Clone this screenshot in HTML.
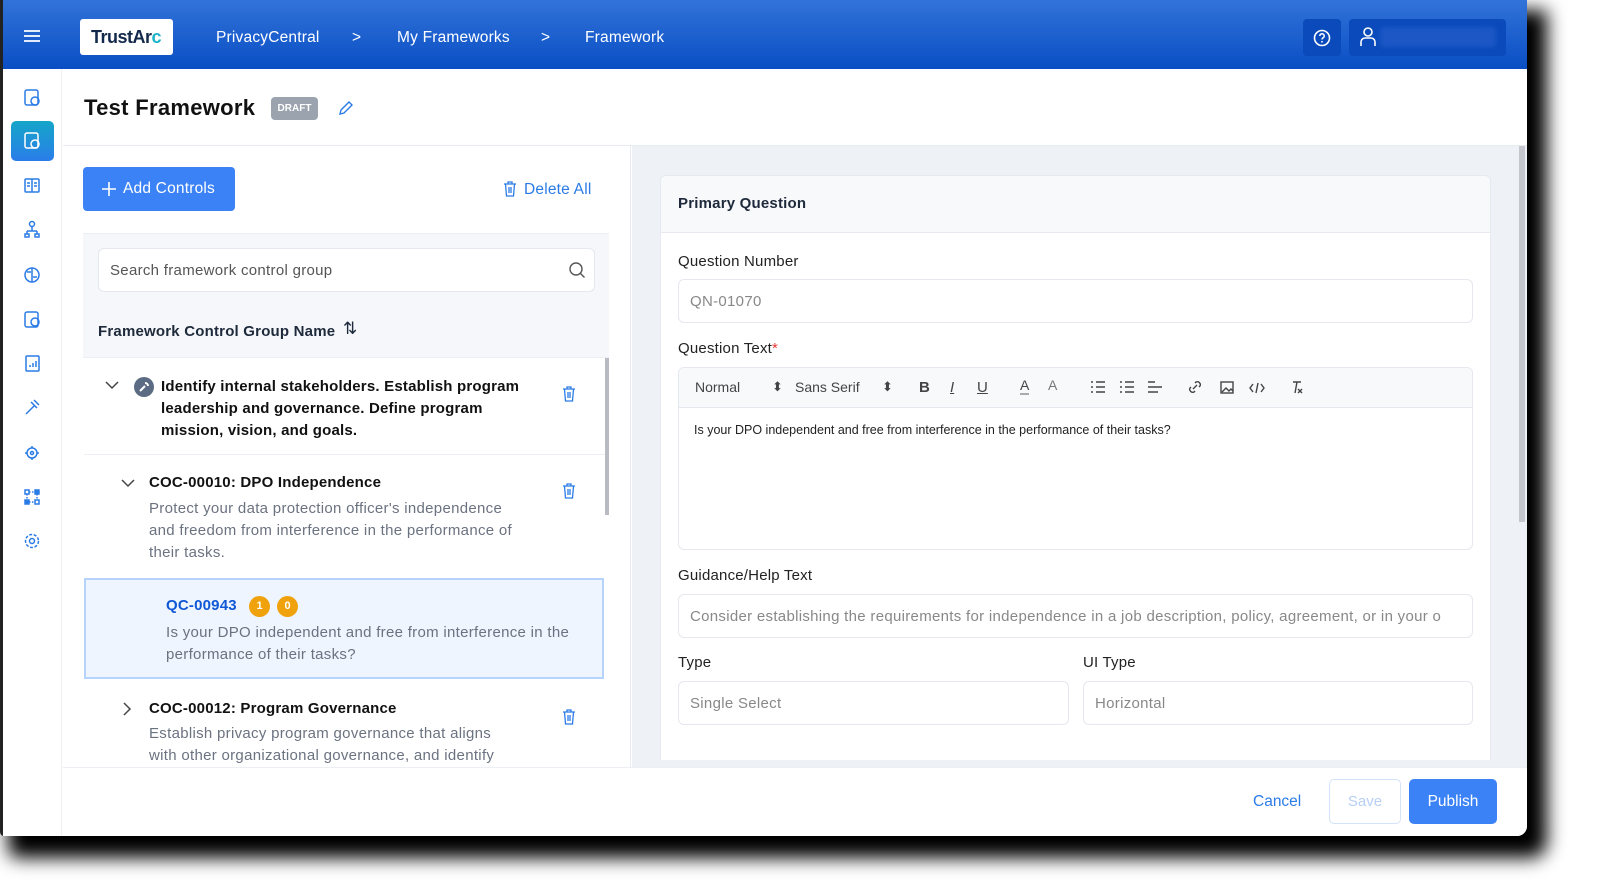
<!DOCTYPE html>
<html><head><meta charset="utf-8"><style>
*{box-sizing:border-box;margin:0;padding:0}
body{width:1600px;height:896px;background:#fff;font-family:"Liberation Sans",sans-serif;position:relative;overflow:hidden;color:#1f2937}
.a{position:absolute;white-space:nowrap}
#app{position:absolute;left:0;top:0;width:1527px;height:836px;background:#fff;border-radius:0 0 10px 4px;box-shadow:14px 16px 18px 6px #000;overflow:hidden}
.hdr{left:0;top:0;width:1527px;height:69px;background:linear-gradient(#3173d8,#0a4ec5)}
.bc{color:#fff;font-size:15.5px;top:29px;letter-spacing:.2px}
.ico{stroke:#2b7be6;fill:none;stroke-width:1.5}
.lbl{font-size:15px;color:#222;letter-spacing:.2px}
.inp{border:1px solid #e5e8ee;border-radius:6px;background:#fff;font-size:15px;color:#888;padding-left:11px;display:flex;align-items:center;letter-spacing:.3px}
.b{font-size:15px;font-weight:bold;color:#111;letter-spacing:.2px}
.g{font-size:15px;line-height:22px;color:#6b7280;letter-spacing:.3px}
</style></head><body>
<div id="app">
<div class="a hdr"></div>
<div class="a" style="left:0;top:0;width:3px;height:836px;background:#222"></div>
<svg class="a" style="left:23px;top:29px" width="18" height="14"><path d="M1 2H17M1 7H17M1 12H17" stroke="#fff" stroke-width="1.8"/></svg>
<div class="a" style="left:80px;top:19px;width:93px;height:36px;background:#fff;border-radius:3px;font-size:18px;font-weight:bold;color:#13294b;padding:8px 0 0 11px;letter-spacing:-0.5px">TrustAr<span style="color:#1bb3c9">c</span></div>
<div class="a bc" style="left:216px">PrivacyCentral</div>
<div class="a bc" style="left:352px">&gt;</div>
<div class="a bc" style="left:397px">My Frameworks</div>
<div class="a bc" style="left:541px">&gt;</div>
<div class="a bc" style="left:585px">Framework</div>
<div class="a" style="left:1303px;top:19px;width:38px;height:37px;background:#0a4abb;border-radius:4px"></div>
<svg class="a" style="left:1312px;top:28px" width="20" height="20"><circle cx="10" cy="10" r="7.5" stroke="#fff" stroke-width="1.6" fill="none"/><path d="M7.8 8a2.2 2.2 0 1 1 3 2c-.7.3-.8.8-.8 1.5" stroke="#fff" stroke-width="1.5" fill="none"/><circle cx="10" cy="13.8" r=".9" fill="#fff"/></svg>
<div class="a" style="left:1349px;top:19px;width:157px;height:37px;background:#0a4abb;border-radius:4px"></div>
<svg class="a" style="left:1357px;top:26px" width="22" height="22"><circle cx="11" cy="6" r="4" stroke="#fff" stroke-width="1.6" fill="none"/><path d="M4 20v-4a4 4 0 0 1 4-4h6a4 4 0 0 1 4 4v4" stroke="#fff" stroke-width="1.6" fill="none"/></svg>
<div class="a" style="left:1380px;top:27px;width:116px;height:20px;background:#1c57c5;border-radius:4px;filter:blur(2px)"></div>

<div class="a" style="left:3px;top:69px;width:59px;height:767px;background:#fff;border-right:1px solid #eef0f4"></div>
<div class="a" style="left:11px;top:121px;width:43px;height:40px;border-radius:5px;background:linear-gradient(#14a6c8,#2a7de9)"></div>
<svg class="a" style="left:0;top:69px" width="62" height="490">
<g class="ico"><rect x="25" y="21" width="13" height="15" rx="2"/><circle cx="35" cy="32" r="4"/></g>
<g stroke="#fff" fill="none" stroke-width="1.5"><rect x="25" y="64" width="13" height="15" rx="2"/><circle cx="35" cy="75" r="4"/></g>
<g class="ico"><rect x="25" y="110" width="14" height="13" rx="1"/><path d="M32 110v13M27 114h3M27 117h3M34 114h3M34 117h3"/></g>
<g class="ico"><circle cx="32" cy="155" r="2.5"/><path d="M32 158v4M27 162h10M27 162v3M37 162v3"/><rect x="25" y="165" width="4" height="3"/><rect x="35" y="165" width="4" height="3"/></g>
<g class="ico"><circle cx="32" cy="206" r="7"/><path d="M32 199v14M27 203h4M33 208h4"/></g>
<g class="ico"><rect x="25" y="243" width="13" height="15" rx="2"/><circle cx="35" cy="253" r="4"/></g>
<g class="ico"><rect x="26" y="287" width="13" height="15" rx="1"/><path d="M30 298v-2M33 298v-4M36 298v-6"/></g>
<g class="ico"><path d="M26 345l8-8M31 333l6 6M34 331l5 5"/></g>
<g class="ico"><circle cx="32" cy="384" r="5"/><circle cx="32" cy="384" r="1.5"/><path d="M32 377v2M32 389v2M25 384h2M37 384h2"/></g>
<g class="ico"><rect x="25" y="421" width="4" height="4"/><rect x="35" y="421" width="4" height="4" fill="#2b7be6"/><rect x="25" y="431" width="4" height="4" fill="#2b7be6"/><rect x="35" y="431" width="4" height="4"/><path d="M29 423h6M27 425v6M37 425v6M29 433h6" stroke-dasharray="1.5 1.5"/></g>
<g class="ico"><circle cx="32" cy="472" r="2.5"/><circle cx="32" cy="472" r="6.5" stroke-dasharray="3 1.6"/></g>
</svg>

<div class="a" style="left:63px;top:70px;width:1464px;height:76px;background:#fff;border-bottom:1px solid #e8ebf0"></div>
<div class="a" style="left:84px;top:95px;font-size:22px;font-weight:bold;color:#111;letter-spacing:.3px">Test Framework</div>
<div class="a" style="left:271px;top:97px;width:47px;height:23px;background:#9aa3ae;border-radius:4px;color:#fff;font-size:10px;font-weight:bold;text-align:center;line-height:23px">DRAFT</div>
<svg class="a" style="left:337px;top:99px" width="18" height="18"><path d="M3 15l1-4 8-8 3 3-8 8z" stroke="#2b7be6" stroke-width="1.4" fill="none"/></svg>

<div class="a" style="left:63px;top:146px;width:568px;height:621px;background:#fff;border-right:1px solid #e8ebf0"></div>
<div class="a" style="left:83px;top:167px;width:152px;height:44px;background:#3b82f6;border-radius:4px;color:#fff;font-size:15.5px;line-height:44px;padding-left:40px;letter-spacing:.2px">Add Controls</div>
<svg class="a" style="left:101px;top:181px" width="16" height="16"><path d="M8 1v14M1 8h14" stroke="#fff" stroke-width="1.6"/></svg>
<svg class="a" style="left:503px;top:181px" width="14" height="16"><path d="M1 3h12M5 3V1h4v2M2.5 3l1 12h7l1-12M6 6v6M8 6v6" stroke="#2b7be6" stroke-width="1.3" fill="none"/></svg>
<div class="a" style="left:524px;top:181px;font-size:15.5px;color:#2b7be6;letter-spacing:.2px">Delete All</div>
<div class="a" style="left:83px;top:233px;width:526px;height:125px;background:#f5f7fa;border-top:1px solid #eceff3;border-bottom:1px solid #eceff3"></div>
<div class="a inp" style="left:98px;top:248px;width:497px;height:44px;color:#555">Search framework control group</div>
<svg class="a" style="left:568px;top:261px" width="18" height="18"><circle cx="8" cy="8" r="6" stroke="#555" stroke-width="1.4" fill="none"/><path d="M12.5 12.5l4 4" stroke="#555" stroke-width="1.4"/></svg>
<div class="a b" style="left:98px;top:323px;color:#1e2a3b">Framework Control Group Name</div>
<div class="a" style="left:343px;top:319px;font-size:17px;color:#1e2a3b">⇅</div>

<div class="a" style="left:605px;top:358px;width:4px;height:157px;background:#b8bcc2"></div>
<svg class="a" style="left:104px;top:379px" width="16" height="12"><path d="M2 3l6 6 6-6" stroke="#444" stroke-width="1.5" fill="none"/></svg>
<div class="a" style="left:134px;top:377px;width:20px;height:20px;border-radius:50%;background:#5b6b84"></div>
<svg class="a" style="left:137px;top:380px" width="14" height="14"><path d="M3 11l5-5M8 3a3 3 0 0 1 3 3" stroke="#fff" stroke-width="2" fill="none"/></svg>
<div class="a b" style="left:161px;top:376px;line-height:22px">Identify internal stakeholders. Establish program<br>leadership and governance. Define program<br>mission, vision, and goals.</div>
<svg class="a" style="left:562px;top:386px" width="14" height="16"><path d="M1 3h12M5 3V1h4v2M2.5 3l1 12h7l1-12M6 6v6M8 6v6" stroke="#2b7be6" stroke-width="1.3" fill="none"/></svg>
<div class="a" style="left:84px;top:454px;width:521px;height:1px;background:#eceff3"></div>
<svg class="a" style="left:120px;top:477px" width="16" height="12"><path d="M2 3l6 6 6-6" stroke="#444" stroke-width="1.5" fill="none"/></svg>
<div class="a b" style="left:149px;top:474px">COC-00010: DPO Independence</div>
<svg class="a" style="left:562px;top:483px" width="14" height="16"><path d="M1 3h12M5 3V1h4v2M2.5 3l1 12h7l1-12M6 6v6M8 6v6" stroke="#2b7be6" stroke-width="1.3" fill="none"/></svg>
<div class="a g" style="left:149px;top:498px">Protect your data protection officer's independence<br>and freedom from interference in the performance of<br>their tasks.</div>
<div class="a" style="left:84px;top:578px;width:520px;height:101px;background:#eef5ff;border:2px solid #b6d4fb"></div>
<div class="a b" style="left:166px;top:597px;color:#1057d6">QC-00943</div>
<div class="a" style="left:249px;top:596px;width:21px;height:21px;border-radius:50%;background:#f0a20c;color:#fff;font-size:11px;font-weight:bold;text-align:center;line-height:21px">1</div>
<div class="a" style="left:277px;top:596px;width:21px;height:21px;border-radius:50%;background:#f0a20c;color:#fff;font-size:11px;font-weight:bold;text-align:center;line-height:21px">0</div>
<div class="a g" style="left:166px;top:622px">Is your DPO independent and free from interference in the<br>performance of their tasks?</div>
<svg class="a" style="left:121px;top:701px" width="12" height="16"><path d="M3 2l6 6-6 6" stroke="#444" stroke-width="1.5" fill="none"/></svg>
<div class="a b" style="left:149px;top:700px">COC-00012: Program Governance</div>
<svg class="a" style="left:562px;top:709px" width="14" height="16"><path d="M1 3h12M5 3V1h4v2M2.5 3l1 12h7l1-12M6 6v6M8 6v6" stroke="#2b7be6" stroke-width="1.3" fill="none"/></svg>
<div class="a g" style="left:149px;top:723px">Establish privacy program governance that aligns<br>with other organizational governance, and identify</div>

<div class="a" style="left:632px;top:146px;width:895px;height:621px;background:#eef2f7"></div>
<div class="a" style="left:1519px;top:146px;width:6px;height:376px;background:#c4c8ce"></div>
<div class="a" style="left:660px;top:175px;width:831px;height:600px;background:#fff;border:1px solid #e6eaf0;border-radius:6px"></div>
<div class="a" style="left:661px;top:176px;width:829px;height:57px;background:#f8f9fb;border-bottom:1px solid #e6eaf0;border-radius:6px 6px 0 0"></div>
<div class="a b" style="left:678px;top:195px;color:#1e2a3b">Primary Question</div>
<div class="a lbl" style="left:678px;top:253px">Question Number</div>
<div class="a inp" style="left:678px;top:279px;width:795px;height:44px">QN-01070</div>
<div class="a lbl" style="left:678px;top:340px">Question Text<span style="color:#e53935">*</span></div>
<div class="a" style="left:678px;top:367px;width:795px;height:183px;border:1px solid #e5e8ee;border-radius:6px"></div>
<div class="a" style="left:679px;top:368px;width:793px;height:40px;background:#f8f9fb;border-bottom:1px solid #e5e8ee;border-radius:6px 6px 0 0"></div>
<div class="a" style="left:695px;top:379px;font-size:14px;color:#444">Normal</div>
<div class="a" style="left:772px;top:379px;font-size:13px;color:#444">⬍</div>
<div class="a" style="left:795px;top:379px;font-size:14px;color:#444">Sans Serif</div>
<div class="a" style="left:882px;top:379px;font-size:13px;color:#444">⬍</div>
<div class="a" style="left:919px;top:379px;font-size:15px;color:#444;font-weight:bold">B</div>
<div class="a" style="left:950px;top:379px;font-size:15px;color:#444;font-style:italic;text-decoration:underline">I</div>
<div class="a" style="left:977px;top:379px;font-size:15px;color:#444;text-decoration:underline">U</div>
<div class="a" style="left:1020px;top:377px;font-size:14px;color:#444;border-bottom:2px solid #aaa;line-height:16px">A</div>
<div class="a" style="left:1048px;top:377px;font-size:14px;color:#777;line-height:16px">A</div>
<svg class="a" style="left:1090px;top:379px" width="230" height="18"><g stroke="#444" stroke-width="1.4" fill="none"><path d="M6 3h9M6 8h9M6 13h9M1 3h2M1 8h2M1 13h2"/><path d="M35 3h9M35 8h9M35 13h9M30 3h2M30 8h2M30 13h2"/><path d="M58 3h7M58 8h14M58 13h10"/><path d="M103 10l4-4M101 8l-1 1a3 3 0 0 0 4 4l1-1M109 8l1-1a3 3 0 0 0-4-4l-1 1"/><rect x="131" y="3" width="12" height="11"/><path d="M132 13l4-4 3 3 2-2 2 2"/><path d="M163 5l-3 4 3 4M171 5l3 4-3 4M168 4l-2 10"/><path d="M203 3h8M207 3l-2 11M208 10l4 4M212 10l-4 4"/></g></svg>
<div class="a" style="left:694px;top:423px;font-size:12.5px;color:#222">Is your DPO independent and free from interference in the performance of their tasks?</div>
<div class="a lbl" style="left:678px;top:567px">Guidance/Help Text</div>
<div class="a inp" style="left:678px;top:594px;width:795px;height:44px;overflow:hidden">Consider establishing the requirements for independence in a job description, policy, agreement, or in your o</div>
<div class="a lbl" style="left:678px;top:654px">Type</div>
<div class="a lbl" style="left:1083px;top:654px">UI Type</div>
<div class="a inp" style="left:678px;top:681px;width:391px;height:44px">Single Select</div>
<div class="a inp" style="left:1083px;top:681px;width:390px;height:44px">Horizontal</div>
<div class="a" style="left:632px;top:760px;width:895px;height:7px;background:#eef2f7"></div>

<div class="a" style="left:63px;top:767px;width:1464px;height:69px;background:#fff;border-top:1px solid #eceff3"></div>
<div class="a" style="left:1253px;top:793px;font-size:15.5px;color:#2b7be6">Cancel</div>
<div class="a" style="left:1329px;top:779px;width:72px;height:45px;border:1px solid #d3e3fb;border-radius:5px;color:#b7cff5;font-size:15px;text-align:center;line-height:43px">Save</div>
<div class="a" style="left:1409px;top:779px;width:88px;height:45px;background:#3b82f6;border-radius:5px;color:#fff;font-size:15.5px;text-align:center;line-height:45px">Publish</div>
</div>
</body></html>
